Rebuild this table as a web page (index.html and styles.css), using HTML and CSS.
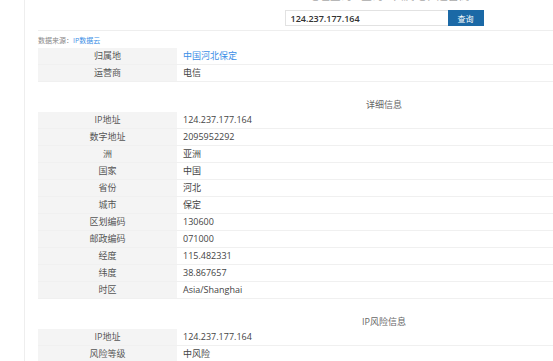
FILE: index.html
```html
<!DOCTYPE html>
<html lang="zh-CN">
<head>
<meta charset="UTF-8">
<meta name="viewport" content="width=device-width, initial-scale=1.0">
<title>IP地址查询</title>
<link rel="stylesheet" href="styles.css">
</head>
<body>
<div class="page">
    <div class="wrap">
        <div class="search">
            <p class="search-title">IP地址查询 - 查询IP归属地、运营商</p>
            <form class="search-form" onsubmit="return false">
                <input type="text" class="search-input" value="124.237.177.164">
                <button type="submit" class="search-button">查询</button>
            </form>
        </div>

        <p class="source">数据来源：<a href="#">IP数据云</a></p>

        <table class="info">
            <tr><th>归属地</th><td><a href="#">中国河北保定</a></td></tr>
            <tr><th>运营商</th><td>电信</td></tr>
        </table>

        <h3 class="section-title">详细信息</h3>
        <table class="info">
            <tr><th>IP地址</th><td>124.237.177.164</td></tr>
            <tr><th>数字地址</th><td>2095952292</td></tr>
            <tr><th>洲</th><td>亚洲</td></tr>
            <tr><th>国家</th><td>中国</td></tr>
            <tr><th>省份</th><td>河北</td></tr>
            <tr><th>城市</th><td>保定</td></tr>
            <tr><th>区划编码</th><td>130600</td></tr>
            <tr><th>邮政编码</th><td>071000</td></tr>
            <tr><th>经度</th><td>115.482331</td></tr>
            <tr><th>纬度</th><td>38.867657</td></tr>
            <tr><th>时区</th><td>Asia/Shanghai</td></tr>
        </table>

        <h3 class="section-title">IP风险信息</h3>
        <table class="info">
            <tr><th>IP地址</th><td>124.237.177.164</td></tr>
            <tr><th>风险等级</th><td>中风险</td></tr>
        </table>
    </div>
</div>
</body>
</html>
```

FILE: styles.css
```css
html, body {
    margin: 0;
    padding: 0;
    background: #fff;
    overflow: hidden;
}
body {
    font-family: "Open Sans", "Noto Sans CJK SC", sans-serif;
    color: #444;
    font-size: 9px;
}
.page {
    margin-left: 24px;
    border-left: 1px solid #eee;
    min-height: 361px;
    padding-left: 13px;
}
.wrap {
    width: 692px;
}
.search {
    border-bottom: 1px solid #eee;
    padding-bottom: 4px;
}
.search-title {
    margin: -10px 0 0;
    text-align: center;
    font-size: 11px;
    line-height: 12px;
    color: #aaa;
}
.search-form {
    display: flex;
    justify-content: center;
    margin-top: 8px;
}
.search-input {
    width: 163px;
    height: 16px;
    box-sizing: border-box;
    border: 1px solid #e2e2e2;
    border-right: none;
    padding: 0 5px;
    font-family: inherit;
    font-size: 9px;
    font-weight: 600;
    color: #333;
    outline: none;
}
.search-button {
    width: 36px;
    height: 16px;
    border: none;
    background: #1b69a6;
    color: #fff;
    font-family: inherit;
    font-size: 8px;
    padding: 0;
    cursor: pointer;
}
.source {
    margin: 0;
    padding: 4px 0 2px;
    font-size: 7px;
    line-height: 11px;
    color: #888;
}
.source a {
    color: #3a8ee6;
    text-decoration: none;
}
.info {
    width: 100%;
    border-collapse: collapse;
    table-layout: fixed;
}
.info th, .info td {
    height: 16px;
    padding: 0;
    border-bottom: 1px solid #f0f0f0;
    font-weight: normal;
    font-size: 9px;
    line-height: 16px;
}
.info th {
    width: 139px;
    background: #f4f4f4;
    color: #555;
    text-align: center;
}
.info td {
    padding-left: 6px;
    text-align: left;
}
.info a {
    color: #3a8ee6;
    text-decoration: none;
}
.section-title {
    margin: 0;
    padding: 15px 0 0;
    height: 15px;
    line-height: 15px;
    text-align: center;
    font-size: 9px;
    font-weight: normal;
    color: #666;
}
```
